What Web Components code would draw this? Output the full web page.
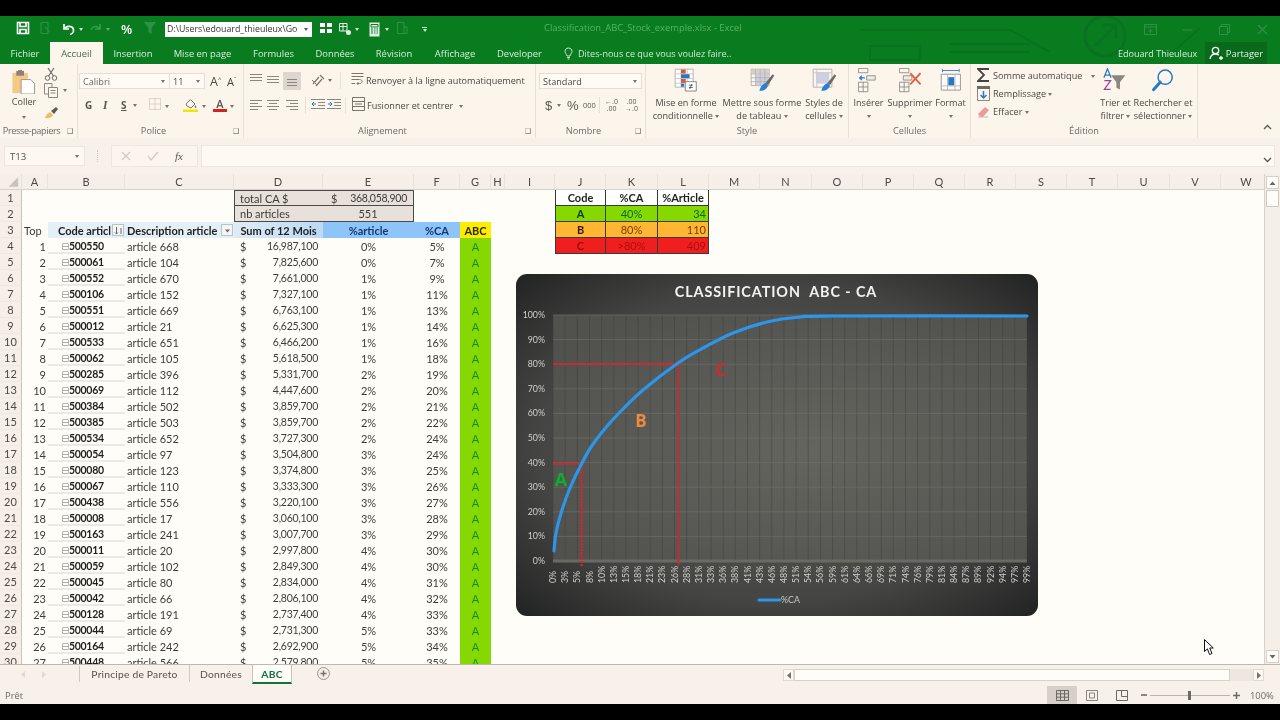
<!DOCTYPE html>
<html lang="fr">
<head>
<meta charset="utf-8">
<title>Classification_ABC_Stock_exemple.xlsx - Excel</title>
<style>
  html, body { margin: 0; height: 720px; overflow: hidden; background: #000; }
  body { padding: 16px 0; box-sizing: border-box; display: flex; flex-direction: column; position: relative; font-family: "Open Sans", sans-serif; }
  /* the reference is a soft video frame */
  body > * { filter: blur(.3px); }
</style>
</head>
<body>
<xl-titlebar></xl-titlebar>
<xl-ribbon></xl-ribbon>
<xl-formula-bar></xl-formula-bar>
<xl-sheet><xl-chart></xl-chart></xl-sheet>
<xl-sheet-tabs></xl-sheet-tabs>
<xl-status></xl-status>
<xl-cursor></xl-cursor>
<script>
const svg = (w, h, body) =>
  `<svg width="${w}" height="${h}" viewBox="0 0 ${w} ${h}" fill="none" xmlns="http://www.w3.org/2000/svg">${body}</svg>`;
const caret = '<i class="caret"></i>';

class Base extends HTMLElement {
  constructor() {
    super();
    this.attachShadow({ mode: "open" });
  }
  connectedCallback() {
    this.shadowRoot.innerHTML = this.render();
  }
}

class XlTitlebar extends Base {
  render() {
    const tabs = [["Fichier", 50], ["Accueil", 53, "on"], ["Insertion", 60], ["Mise en page", 79], ["Formules", 63], ["Données", 60], ["Révision", 58], ["Affichage", 64], ["Developer", 65]];
    const dim = "#2f9146";
    return `<style>
      :host { display: block; height: 48px; background: #0a7c20; color: #fff; position: relative; font: 9.4px "Open Sans", sans-serif; flex: none; }
      .top { height: 26px; display: flex; align-items: center; }
      .top > * { flex: none; }
      .decor { position: absolute; left: 860px; top: 0; }
      .caret { display: inline-block; border: 2.5px solid transparent; border-top: 3px solid #cfe8d4; border-bottom: 0; }
      .path { width: 147px; height: 15px; background: #fff; color: #333; margin-left: 8px; display: flex; align-items: center; justify-content: space-between; box-sizing: border-box; padding: 0 4px 0 2px; font-size: 8.8px; white-space: nowrap; overflow: hidden; }
      .path .caret { border-top-color: #555; }
      .doc { position: absolute; left: 544px; top: 5px; width: 191px; text-align: center; color: #58b06b; font-size: 9.4px; white-space: nowrap; }
      .win { position: absolute; top: 6px; left: 1144px; display: flex; align-items: center; height: 14px; }
      .win span { width: 37.5px; display: flex; }
      .tabs { height: 22px; display: flex; align-items: stretch; position: relative; }
      .tab { flex: none; display: flex; align-items: center; justify-content: center; color: #d6ecd9; white-space: nowrap; }
      .tab.on { background: #fcf5ec; color: #40704a; }
      .tell { display: flex; align-items: center; gap: 5px; margin-left: 12px; color: #cfe8d4; font-size: 9.05px; white-space: nowrap; }
      .user { position: absolute; left: 1118px; top: 0; height: 22px; display: flex; align-items: center; color: #d6ecd9; font-size: 9.05px; white-space: nowrap; }
      .share { position: absolute; left: 1205px; top: 0; width: 62px; height: 22px; background: #0a6a1c; display: flex; align-items: center; justify-content: center; gap: 3px; color: #e4f2e6; }
    </style>
    <svg class="decor" width="340" height="48" fill="none" stroke="#087220" stroke-width="2"><path d="M0 14H150L190 36M10 30H60V44H10ZM90 28H170M90 36H170"/><circle cx="245" cy="20" r="20" stroke-width="3"/><path d="M235 30L256 9M243 9H256V22" stroke-width="3"/><path d="M300 48L340 12"/></svg>
    <div class="top">
      <span style="margin-left:16px">${svg(14, 14, '<path d="M1.5 1.5H12.5V12.5H1.5ZM4 1.5V5.5H10V1.5M4 12.5V8.5H10V12.5" stroke="#fff" stroke-width="1.6"/>')}</span>
      <span style="margin-left:8px">${svg(14, 14, `<path d="M3 1.5H10V12.5H3Z" stroke="${dim}"/><path d="M7 6L12 11" stroke="${dim}"/>`)}</span>
      <span style="margin-left:9px;display:flex;align-items:center;gap:3px">${svg(15, 14, '<path d="M3 2V7H8" stroke="#fff" stroke-width="1.7"/><path d="M3.5 6.5C6 3.5 12 3.5 12.5 8C12.8 10 11 12 9 12.5" stroke="#fff" stroke-width="1.7"/>')}${caret}</span>
      <span style="margin-left:6px;opacity:.45;display:flex;align-items:center;gap:3px">${svg(14, 14, '<path d="M11 2V7H6M10.5 6.5C8 3.5 3 4 2 8" stroke="#6fc182" stroke-width="1.5"/>')}${caret}</span>
      <b style="margin-left:11px;font-size:13px;font-weight:600;width:14px">%</b>
      <span style="margin-left:8px">${svg(14, 14, `<path d="M1 1H13L8.5 7V13L5.5 11V7Z" fill="${dim}"/>`)}</span>
      <div class="path"><span>D:\\Users\\edouard_thieuleux\\Go</span>${caret}</div>
      <span style="margin-left:7px">${svg(14, 12, '<path d="M1 1H6V5H1ZM8 1H13V5H8ZM1 7H6V11H1ZM8 7H13V11H8Z" fill="#fff"/>')}</span>
      <span style="margin-left:5px;display:flex;align-items:center;gap:3px">${svg(14, 14, '<path d="M1.5 1.5H9V9H1.5Z" stroke="#e4f2e6"/><path d="M1.5 4.5H9M5 1.5V9" stroke="#e4f2e6"/><circle cx="10.5" cy="10.5" r="2.5" fill="#e4f2e6"/>')}${caret}</span>
      <span style="margin-left:10px;display:flex;align-items:center;gap:5px">${svg(11, 15, '<rect x=".5" y=".5" width="10" height="14" fill="#e4f2e6"/><path d="M2 2.5H9V5H2ZM2 7H4M5 7H6.5M7.5 7H9M2 9H4M5 9H6.5M7.5 9H9M2 11H4M5 11H6.5M7.5 11H9" stroke="#0a7c20"/>')}${caret}</span>
      <span style="margin-left:7px">${svg(12, 14, `<path d="M1.5 1.5H8V12.5H1.5ZM8 6H11V12.5H8" stroke="${dim}"/>`)}</span>
      <span style="margin-left:14px;display:flex;flex-direction:column;align-items:center;gap:1px"><i style="width:5px;height:1px;background:#cfe8d4"></i>${caret}</span>
    </div>
    <div class="doc">Classification_ABC_Stock_exemple.xlsx - Excel</div>
    <div class="win">
      <span>${svg(13, 11, `<path d="M.5 .5H12.5V10.5H.5ZM.5 3H12.5M6.5 5V9M4.5 7H8.5" stroke="${dim}"/>`)}</span>
      <span>${svg(11, 11, `<path d="M0 6H10" stroke="${dim}"/>`)}</span>
      <span>${svg(11, 11, `<path d="M.5 2.5H8.5V10.5H.5ZM2.5 2.5V.5H10.5V8.5H8.5" stroke="${dim}"/>`)}</span>
      <span>${svg(11, 11, `<path d="M1 1L10 10M10 1L1 10" stroke="${dim}" stroke-width="1.2"/>`)}</span>
    </div>
    <div class="tabs">
      ${tabs.map(([t, w, on]) => `<div class="tab ${on || ""}" style="width:${w}px">${t}</div>`).join("")}
      <div class="tell">${svg(9, 13, '<path d="M4.5 1C2.3 1 1 2.6 1 4.4C1 6.2 2.7 7.2 3 9H6C6.3 7.2 8 6.2 8 4.4C8 2.6 6.7 1 4.5 1ZM3.2 10.5H5.8M3.6 12H5.4" stroke="#cfe8d4"/>')}<span>Dites-nous ce que vous voulez faire..</span></div>
      <div class="user">Edouard Thieuleux</div>
      <div class="share">${svg(14, 14, '<circle cx="6.5" cy="4.5" r="3.2" stroke="#fff" stroke-width="1.3"/><path d="M1 13C1.5 9.5 3.5 8 6.5 8C8 8 9 8.4 9.8 9.2M10 12H14M12 10V14" stroke="#fff" stroke-width="1.3"/>')}<span>Partager</span></div>
    </div>`;
  }
}

class XlGroup extends HTMLElement {
  constructor() {
    super();
    this.attachShadow({ mode: "open" });
    this.shadowRoot.innerHTML = `<style>
      :host { display: flex; flex-direction: column; flex: none; height: 74px; box-sizing: border-box; border-right: 1px solid #e8e0d8; position: relative; }
      :host([launcher]) .label { padding-right: 14px; }
      .body { flex: 1; min-height: 0; display: flex; }
      .label { height: 15px; text-align: center; color: #6d6a66; font-size: 9.2px; line-height: 15px; white-space: nowrap; letter-spacing: var(--label-ls, 0); }
      .launch { position: absolute; right: 4px; bottom: 4px; width: 4px; height: 4px; border: 1px solid #9a958f; border-top-color: #ccc; border-left-color: #ccc; }
    </style><div class="body"><slot></slot></div><div class="label"></div>`;
  }
  connectedCallback() {
    this.shadowRoot.querySelector(".label").textContent = this.getAttribute("label");
    if (this.hasAttribute("launcher")) {
      const l = document.createElement("div");
      l.className = "launch";
      this.shadowRoot.appendChild(l);
    }
  }
}

class XlRibbon extends Base {
  render() {
    const gray = "#8b8680";
    const alignIcon = (rows) => svg(14, 13, rows.map(([x1, x2, y]) => `<path d="M${x1} ${y}H${x2}" stroke="${gray}"/>`).join(""));
    const big = (icon, l1, l2, w, ml) => `<div class="big" style="width:${w}px;margin-left:${ml}px"><div class="bigicon">${icon}</div><div class="t">${l1}</div><div class="t">${l2}</div></div>`;
    const fmtIcon = svg(30, 32, `<path d="M1.5 1.5H24.5V24.5H1.5Z" fill="#fff" stroke="#a8a39d"/><path d="M1.5 7.5H24.5M1.5 13.5H24.5M1.5 19.5H24.5M9 1.5V24.5M17 1.5V24.5" stroke="#c4bfb8"/><path d="M9 2H15V7H9Z" fill="#d9543a"/><path d="M9 8H20V13H9Z" fill="#2676c9"/><path d="M9 14H15V19H9Z" fill="#d9543a"/><path d="M9 20H13V24H9Z" fill="#2676c9"/><path d="M14.5 17.5H28.5V29.5H14.5Z" fill="#fff" stroke="#6d6a66"/><path d="M19 22H24M19 25H24M23 20.5L20 27" stroke="#444"/>`);
    const tblIcon = svg(32, 32, `<path d="M1.5 1.5H24.5V22.5H1.5Z" fill="#f8f6f3" stroke="#a8a39d"/><path d="M2 2H24V7H2Z" fill="#d5d0ca"/><path d="M7 8H24V22H7Z" fill="#cfcfe4"/><path d="M1.5 7.5H24.5M1.5 12.5H24.5M1.5 17.5H24.5M7 1.5V22.5M13 1.5V22.5M19 1.5V22.5" stroke="#b4afa9"/><path d="M20 19L29 8L31 10L23 22Z" fill="#6f6a64"/><path d="M12 29C13 24 17 20 21 19L23 23C21 27 17 30 12 29Z" fill="#2b7fd1"/>`);
    const styIcon = svg(32, 32, `<path d="M1.5 1.5H25.5V24.5H1.5Z" fill="#f8f6f3" stroke="#a8a39d"/><path d="M6 6H22V20H6Z" fill="#cfcfe4"/><path d="M1.5 6H25.5M6 1.5V24.5" stroke="#c4bfb8"/><path d="M20 19L29 8L31 10L23 22Z" fill="#6f6a64"/><path d="M12 29C13 24 17 20 21 19L23 23C21 27 17 30 12 29Z" fill="#2b7fd1"/>`);
    const cellsBase = `<path d="M.5 .5H11.5V5.5H.5ZM.5 16.5H11.5V27.5H.5ZM.5 22H11.5M6 16.5V27.5" stroke="#8b8680"/>`;
    const insIcon = svg(24, 29, `${cellsBase}<path d="M10 9H20V14H10Z" fill="#f0ebe5" stroke="#8b8680"/><path d="M8 11.5H2M4.5 9L2 11.5L4.5 14" stroke="#2676c9" stroke-width="1.5"/>`);
    const delIcon = svg(26, 29, `${cellsBase}<path d="M5 9H15V14H5Z" fill="#f0ebe5" stroke="#8b8680"/><path d="M13 6L25 19M25 6L13 19" stroke="#e05a3c" stroke-width="2"/>`);
    const frmIcon = svg(26, 30, `<path d="M3 3H23M3 1V5M23 1V5" stroke="#2676c9"/><path d="M1.5 7.5H24.5V26.5H1.5Z" fill="#fff" stroke="#8b8680"/><path d="M10 11H17V21H10Z" fill="#2676c9"/><path d="M9 7.5V26.5M18 7.5V26.5M1.5 21.5H24.5" stroke="#b4afa9"/>`);
    return `<style>
      :host { display: flex; height: 74px; background: #fcf5ec; color: #4a4744; font: 9.1px "Open Sans", sans-serif; flex: none; position: relative; }
      .caret { display: inline-block; flex: none; border: 2.5px solid transparent; border-top: 3px solid #77726c; border-bottom: 0; vertical-align: middle; }
      .col { display: flex; flex-direction: column; }
      .row { display: flex; align-items: center; height: 16px; flex: none; }
      .row > * { flex: none; }
      .box { height: 16px; box-sizing: border-box; background: #fffbf4; border: 1px solid #e6ded5; display: flex; align-items: center; justify-content: space-between; padding: 0 4px 0 3px; }
      .big { display: flex; flex-direction: column; align-items: center; flex: none; }
      .bigicon { height: 28px; margin-top: 4px; display: flex; align-items: flex-start; justify-content: center; }
      .bigicon svg { height: 25px; width: auto; }
      .t { height: 13px; line-height: 13px; white-space: nowrap; text-align: center; }
      .collapse { position: absolute; right: 8px; bottom: 5px; }
      .on { background: #dcd6cf; }
      .ed { height: 18px; display: flex; align-items: center; gap: 3px; white-space: nowrap; }
    </style>
    <xl-group label="Presse-papiers" launcher style="width:78px;--label-ls:-.42px">
      <div class="col" style="width:40px;align-items:center;margin-left:4px;padding-top:5px">
        ${svg(26, 26, '<path d="M1 4H17V25H1Z" fill="#f5c985"/><path d="M5 2H13V7H5Z" fill="#8d8076"/><path d="M7 1H11V3H7Z" fill="#8d8076"/><path d="M10 11H20L24 15V26H10Z" fill="#fff" stroke="#9a958f"/>')}
        <div class="t" style="margin-top:1px">Coller</div><div style="margin-top:2px">${caret}</div>
      </div>
      <div class="col" style="padding-top:3px;gap:1px">
        ${svg(14, 14, '<circle cx="3.5" cy="11" r="2.3" stroke="#6d6a66"/><circle cx="10.5" cy="11" r="2.3" stroke="#6d6a66"/><path d="M4.5 9L10 1M9.5 9L4 1" stroke="#6d6a66" stroke-width="1.2"/>')}
        <div style="display:flex;align-items:center;gap:5px;margin-top:1px">${svg(14, 15, '<path d="M.5 .5H8V11H.5Z" fill="#fcf5ec" stroke="#8b8680"/><path d="M4.5 4.5H13.5V14.5H4.5Z" fill="#fcf5ec" stroke="#8b8680"/><path d="M6.5 7.5H11.5M6.5 10H11.5" stroke="#8b8680"/>')}${caret}</div>
        <span style="margin-top:8px">${svg(14, 12, '<path d="M1 11C2 8 4 6 6 5L9 8C8 10 5 12 1 11Z" fill="#e3c06a"/><path d="M7 4L12 0L14 2L10 7Z" fill="#5e5a55"/>')}</span>
      </div>
    </xl-group>
    <xl-group label="Police" launcher style="width:166px">
      <div class="col" style="margin-left:1px;padding-top:9px;gap:8px">
        <div class="row">
          <div class="box" style="width:91px;color:#666"><span>Calibri</span>${caret}</div>
          <div class="box" style="width:35px;border-left:0"><span>11</span>${caret}</div>
          <span style="margin-left:5px;font-size:12.5px;width:17px">A<sup style="font-size:6px">^</sup></span>
          <span style="font-size:11px">A<sup style="font-size:6px">ˇ</sup></span>
        </div>
        <div class="row" style="font-family:'Liberation Serif',serif;font-size:11.5px;color:#5a5652">
          <b style="margin-left:6px;width:18px;font-family:'Open Sans';font-size:10px">G</b>
          <i style="width:18px;font-weight:600">I</i>
          <b style="width:12px;text-decoration:underline;font-family:'Open Sans';font-size:10px">S</b>${caret}
          <span style="margin-left:11px">${svg(14, 14, '<path d="M1.5 1.5H12.5V12.5H1.5ZM1.5 7H12.5M7 1.5V12.5" stroke="#bdb8b2" stroke-dasharray="1 1"/>')}</span>
          <span style="margin-left:3px">${caret}</span>
          <span style="margin-left:14px">${svg(15, 15, '<path d="M3 7L7.5 2.5L12 7L8 11L4 9Z" fill="#fcf5ec" stroke="#7a756f"/><path d="M12 8C13 9.5 14 10 13 11C12 11.5 11.5 9.5 12 8Z" fill="#2676c9"/><path d="M0 12.5H15V15H0Z" fill="#f2e600"/>')}</span>
          <span style="margin-left:4px">${caret}</span>
          <span style="margin-left:7px;display:flex;flex-direction:column;align-items:center;width:14px;font:600 11px/11px 'Open Sans'">A<i style="width:14px;height:3px;background:#d6211f"></i></span>
          <span style="margin-left:3px">${caret}</span>
        </div>
      </div>
    </xl-group>
    <xl-group label="Alignement" launcher style="width:292px">
      <div class="col" style="margin-left:4px;padding-top:8px;gap:8px">
        <div class="row" style="height:17px">
          <span style="width:17px;margin-left:1px">${alignIcon([[1, 13, 1.5], [1, 13, 4.5], [1, 13, 7.5]])}</span>
          <span style="width:17px">${alignIcon([[1, 13, 3.5], [1, 13, 6.5], [1, 13, 9.5]])}</span>
          <span class="on" style="width:18px;height:18px;display:flex;align-items:center;justify-content:center">${alignIcon([[2, 12, 5.5], [2, 12, 8.5], [2, 12, 11.5]])}</span>
          <span style="margin-left:10px;display:flex;align-items:center;gap:2px">${svg(15, 14, '<path d="M2 10L8 3M5 12L11 5M9 1L13 5" stroke="#7a756f" stroke-width="1.2"/><path d="M1 6L6 11" stroke="#7a756f"/>')}${caret}</span>
          <span style="margin-left:8px;width:1px;height:17px;background:#e8e0d8"></span>
          <span style="margin-left:10px;width:15px">${svg(13, 14, '<path d="M.5 1.5H12.5M.5 4.5H12.5M.5 7.5H8.5C12 7.5 12 11.5 8.5 11.5H6M7.5 10L6 11.5L7.5 13M.5 11.5H4" stroke="#7a756f"/>')}</span>
          <span style="white-space:nowrap">Renvoyer à la ligne automatiquement</span>
        </div>
        <div class="row" style="height:17px">
          <span style="width:17px;margin-left:1px">${alignIcon([[1, 13, 2.5], [1, 9, 5.5], [1, 13, 8.5], [1, 9, 11.5]])}</span>
          <span style="width:17px">${alignIcon([[1, 13, 2.5], [3, 11, 5.5], [1, 13, 8.5], [3, 11, 11.5]])}</span>
          <span style="width:18px;padding-left:2px;box-sizing:border-box">${alignIcon([[1, 13, 2.5], [5, 13, 5.5], [1, 13, 8.5], [5, 13, 11.5]])}</span>
          <span style="margin-left:4px;width:1px;height:17px;background:#e8e0d8"></span>
          <span style="margin-left:5px;width:16px">${svg(14, 12, '<path d="M0 1.5H14M7 4.5H14M7 7.5H14M0 10.5H14" stroke="#8b8680"/><path d="M5 6H1M3 4L1 6L3 8" stroke="#2676c9"/>')}</span>
          <span style="width:17px">${svg(14, 12, '<path d="M0 1.5H14M7 4.5H14M7 7.5H14M0 10.5H14" stroke="#8b8680"/><path d="M1 6H5M3 4L5 6L3 8" stroke="#2676c9"/>')}</span>
          <span style="margin-left:1px;width:1px;height:17px;background:#e8e0d8"></span>
          <span style="margin-left:6px;width:15px">${svg(13, 14, '<path d="M.5 .5H12.5V13.5H.5ZM.5 4.5H12.5M.5 9.5H12.5M3 7H10" stroke="#7a756f"/>')}</span>
          <span style="white-space:nowrap">Fusionner et centrer</span>
          <span style="margin-left:6px">${caret}</span>
        </div>
      </div>
    </xl-group>
    <xl-group label="Nombre" launcher style="width:110px">
      <div class="col" style="margin-left:3px;padding-top:9px;gap:8px">
        <div class="box" style="width:103px"><span>Standard</span>${caret}</div>
        <div class="row" style="color:#5a5652">
          <span style="margin-left:6px;font-size:13px;width:12px;font-family:'Liberation Sans'">$</span>${caret}
          <span style="margin-left:6px;font-size:13px;width:16px;font-family:'Liberation Sans'">%</span>
          <span style="font-size:7.5px;width:14px">000</span>
          <span style="margin-left:2px;width:1px;height:16px;background:#e8e0d8"></span>
          <span style="margin-left:3px;font-size:7px;line-height:7px;width:17px;text-align:center">←.0<br>.00</span>
          <span style="margin-left:3px;font-size:7px;line-height:7px;width:17px;text-align:center">.00<br>→.0</span>
        </div>
      </div>
    </xl-group>
    <xl-group label="Style" style="width:203px">
      ${big(fmtIcon, "Mise en forme", `conditionnelle ${caret}`, 70, 5)}
      ${big(tblIcon, "Mettre sous forme", `de tableau ${caret}`, 78, 2)}
      ${big(styIcon, "Styles de", `cellules ${caret}`, 36, 5)}
    </xl-group>
    <xl-group label="Cellules" style="width:122px">
      ${big(insIcon, "Insérer", caret, 29, 5)}
      ${big(delIcon, "Supprimer", caret, 44, 5)}
      ${big(frmIcon, "Format", caret, 31, 3)}
    </xl-group>
    <xl-group label="Édition" style="width:227px">
      <div class="col" style="margin-left:6px;padding-top:2px;width:124px">
        <div class="ed">${svg(13, 14, '<path d="M12 1H1L7 7L1 13H12" stroke="#444" stroke-width="1.8"/>')}<span style="margin-left:0">Somme automatique</span><span style="margin-left:6px">${caret}</span></div>
        <div class="ed">${svg(13, 15, '<path d="M.5 .5H12.5V14.5H.5Z" stroke="#8b8680"/><path d="M0 0H13V3H0Z" fill="#6d6a66"/><path d="M6.5 5V12M3.5 9L6.5 12L9.5 9" stroke="#2676c9" stroke-width="1.5"/>')}<span style="margin-left:0">Remplissage ${caret}</span></div>
        <div class="ed">${svg(13, 13, '<path d="M1 9L8 2L12 5L6 12H3Z" fill="#ef9a9a"/><path d="M1 12H11" stroke="#bbb"/>')}<span style="margin-left:0">Effacer ${caret}</span></div>
      </div>
      <div class="big" style="width:29px"><div class="bigicon">${svg(28, 28, '<path d="M1 11L5 1L9 11M2.5 8H7.5" stroke="#2676c9" stroke-width="1.4"/><path d="M1.5 14H8.5L1.5 24H8.5" stroke="#a0409a" stroke-width="1.4"/><path d="M9 8H25L19 16V24L15 22V16Z" fill="#8b8680"/>')}</div><div class="t">Trier et</div><div class="t">filtrer ${caret}</div></div>
      <div class="big" style="width:58px;margin-left:4px"><div class="bigicon">${svg(28, 30, '<circle cx="17" cy="11" r="8.5" stroke="#2676c9" stroke-width="1.8" fill="#fcf5ec"/><path d="M11 17L3 26" stroke="#2676c9" stroke-width="3.5" stroke-linecap="round"/>')}</div><div class="t">Rechercher et</div><div class="t">sélectionner ${caret}</div></div>
    </xl-group>
    <span class="collapse">${svg(9, 6, '<path d="M1 5L4.5 1.5L8 5" stroke="#5a5652" stroke-width="1.3"/>')}</span>`;
  }
}

class XlFormulaBar extends Base {
  render() {
    return `<style>
      :host { display: flex; align-items: center; height: 36px; background: #f8f1ea; font: 9.6px "Open Sans", sans-serif; color: #55524e; flex: none; padding: 0 5px 0 4px; box-sizing: border-box; position: relative; }
      .name { width: 81px; height: 20px; box-sizing: border-box; background: #fdf8f1; border: 1px solid #eee5dc; display: flex; align-items: center; justify-content: space-between; padding: 0 5px; }
      .caret { display: inline-block; border: 2.5px solid transparent; border-top: 3px solid #77726c; border-bottom: 0; }
      .dots { width: 1px; height: 12px; margin: 0 12px 0 12px; border-left: 1px dotted #cfc8c0; }
      .fn { width: 87px; height: 22px; box-sizing: border-box; background: #fbf5ee; border: 1px solid #eee5dc; display: flex; align-items: center; gap: 16px; padding-left: 9px; }
      .input { flex: 1; height: 22px; margin-left: 3px; box-sizing: border-box; background: #fffaf1; border: 1px solid #eee5dc; }
      .more { position: absolute; right: 8px; top: 15px; }
    </style>
    <div class="name"><span>T13</span><i class="caret"></i></div>
    <div class="dots"></div>
    <div class="fn">
      ${svg(10, 10, '<path d="M1 1L9 9M9 1L1 9" stroke="#cfc8c0" stroke-width="1.2"/>')}
      ${svg(12, 10, '<path d="M1 5L4 9L11 1" stroke="#cfc8c0" stroke-width="1.2"/>')}
      <i style="font:italic 11px 'Liberation Serif',serif;color:#5a5652">fx</i>
    </div>
    <div class="input"></div>
    <span class="more">${svg(9, 6, '<path d="M1 1L4.5 4.5L8 1" stroke="#5a5652" stroke-width="1.3"/>')}</span>`;
  }
}

const SHEET_ROWS = [
  ["500550", "668", "16,987,100", 0, 5], ["500061", "104", "7,825,600", 0, 7], ["500552", "670", "7,661,000", 1, 9],
  ["500106", "152", "7,327,100", 1, 11], ["500551", "669", "6,763,100", 1, 13], ["500012", "21", "6,625,300", 1, 14],
  ["500533", "651", "6,466,200", 1, 16], ["500062", "105", "5,618,500", 1, 18], ["500285", "396", "5,331,700", 2, 19],
  ["500069", "112", "4,447,600", 2, 20], ["500384", "502", "3,859,700", 2, 21], ["500385", "503", "3,859,700", 2, 22],
  ["500534", "652", "3,727,300", 2, 24], ["500054", "97", "3,504,800", 3, 24], ["500080", "123", "3,374,800", 3, 25],
  ["500067", "110", "3,333,300", 3, 26], ["500438", "556", "3,220,100", 3, 27], ["500008", "17", "3,060,100", 3, 28],
  ["500163", "241", "3,007,700", 3, 29], ["500011", "20", "2,997,800", 4, 30], ["500059", "102", "2,849,300", 4, 30],
  ["500045", "80", "2,834,000", 4, 31], ["500042", "66", "2,806,100", 4, 32], ["500128", "191", "2,737,400", 4, 33],
  ["500044", "69", "2,731,300", 5, 33], ["500164", "242", "2,692,900", 5, 34], ["500448", "566", "2,579,800", 5, 35],
];
const COL_WIDTHS = [22, 26, 77, 109, 89, 91, 46, 31, 14, 50, 51, 52, 51, 51, 52, 51, 51, 51, 51, 51, 51, 52, 51, 51];
const COL_NAMES = "ABCDEFGHIJKLMNOPQRSTUVW".split("");

class XlSheet extends Base {
  render() {
    const cell = (col, row, text, cls = "") =>
      `<div class="c ${cls}" style="grid-area:${row + 1}/${col + 1}">${text}</div>`;
    let html = `<div class="c hd corner" style="grid-area:1/1">${svg(22, 16, '<path d="M19 3V13H9Z" fill="#c9c3bc"/>')}</div>`;
    COL_NAMES.forEach((n, i) => { html += cell(i + 1, 0, n, "hd"); });
    for (let r = 1; r <= 30; r++) html += cell(0, r, r, "hd rh");
    // block above the pivot table
    html += `<div class="c tot l" style="grid-area:2/5;border-width:1px 0 1px 1px">total CA $</div>`;
    html += `<div class="c tot money" style="grid-area:2/6;border-width:1px 1px 1px 0"><span>$</span><span class="v">368,058,900</span></div>`;
    html += `<div class="c tot l" style="grid-area:3/5;border-width:0 0 1px 1px">nb articles</div>`;
    html += `<div class="c tot mid" style="grid-area:3/6;border-width:0 1px 1px 0">551</div>`;
    // small legend table
    [["Code", "%CA", "%Article", "lg w"], ["A", "40%", "34", "lg ga"], ["B", "80%", "110", "lg ob"], ["C", "&gt;80%", "409", "lg rc"]].forEach((r, i) => {
      html += cell(10, i + 1, r[0], r[3] + " mid bold first");
      html += cell(11, i + 1, r[1], r[3] + " mid" + (i ? "" : " bold"));
      html += cell(12, i + 1, r[2], r[3] + (i ? " num" : " mid bold"));
    });
    // pivot header
    html += cell(1, 3, "Top", "l");
    html += cell(2, 3, `<span>Code articl</span><i class="btn">${svg(9, 9, '<path d="M2.5 1V8M1 6.5L2.5 8L4 6.5M7 2V8" stroke="#667"/>')}</i>`, "ph code-h bold");
    html += cell(3, 3, `<span>Description article</span><i class="btn">${svg(9, 9, '<path d="M2 3.5H7L4.5 6.5Z" fill="#667"/>')}</i>`, "ph bold");
    html += cell(4, 3, "Sum of 12 Mois", "ph2 bold mid");
    html += cell(5, 3, "%article", "pb bold mid");
    html += cell(6, 3, "%CA", "pb bold mid");
    html += cell(7, 3, "ABC", "py bold mid");
    SHEET_ROWS.forEach(([code, art, sum, pa, pc], i) => {
      const r = i + 4;
      html += cell(1, r, i + 1, "num");
      html += cell(2, r, `<i class="minus"></i><b>${code}</b>`, "code");
      html += cell(3, r, `article ${art}`, "l");
      html += `<div class="c money" style="grid-area:${r + 1}/5;padding:0 5px 0 6px"><span>$</span><span class="v">${sum}</span></div>`;
      html += cell(5, r, `${pa}%`, "mid");
      html += cell(6, r, `${pc}%`, "mid");
      html += cell(7, r, "A", "ga2 mid");
    });
    return `<style>
      :host { display: flex; flex: 1; min-height: 0; position: relative; background: #fffdf7; overflow: hidden; }
      .grid { flex: none; width: 1264px; overflow: hidden; display: grid; grid-template-columns: ${COL_WIDTHS.map((w) => w + "px").join(" ")}; grid-auto-rows: 16px; font: 11px Lato, sans-serif; color: #3e3c3a; position: relative; }
      .c { box-sizing: border-box; white-space: nowrap; overflow: hidden; display: flex; align-items: center; min-width: 0; height: 16px; }
      .hd { background: #f6efe8; justify-content: center; color: #4d4a47; border-right: 1px solid #e9e2da; border-bottom: 1px solid #d8d1ca; }
      .rh { border-right: 1px solid #c8c2bb; border-bottom: 1px solid #efe8e0; }
      .corner { padding: 0; }
      .l { padding-left: 2px; }
      .tot { background: #e8e0da; border: solid #4a4a4a; font-size: 11px; }
      .tot.l { padding-left: 5px; }
      .money { justify-content: space-between; padding: 0 6px 0 6px; }
      .v { font-size: 10.5px; letter-spacing: -.25px; }
      .tot.money { padding-left: 8px; }
      .num { justify-content: flex-end; padding-right: 2px; }
      .mid { justify-content: center; }
      .bold { font-weight: 700; color: #1f1f1f; }
      .ph { background: #e5eff7; padding-left: 2px; justify-content: space-between; }
      .code-h { padding-left: 10px; }
      .ph2 { background: linear-gradient(90deg, #dfecf7, #bcd9f5); }
      .pb { background: #8ec4f7; color: #14396e; }
      .py { background: #ffec00; color: #2a2a00; }
      .btn { flex: none; width: 12px; height: 12px; box-sizing: border-box; border: 1px solid #b7c4ce; background: #f5f5f2; margin-right: 1px; display: flex; align-items: center; justify-content: center; }
      .code { box-shadow: inset 0 -2px #ece8e4; padding-left: 14px; color: #1f1f1f; font-weight: 700; height: 16px; }
      .minus { flex: none; width: 7px; height: 7px; box-sizing: border-box; border: 1px solid #b5b0aa; background: linear-gradient(#b5b0aa, #b5b0aa) center/5px 1px no-repeat; border-radius: 1px; }
      .code b { font-weight: 700; font-size: 10.5px; letter-spacing: -.3px; }
      .ga2 { background: #86d900; color: #0d8a2e; }
      .lg { border: 1px solid #3a3a3a; border-width: 0 1px 1px 0; }
      .lg.first { border-left-width: 1px; }
      .lg.w { background: #fff; color: #1f1f1f; }
      .lg.ga { background: #86d900; color: #0a6a22; }
      .lg.ob { background: #ffb733; color: #7a3a00; }
      .lg.rc { background: #f01f1f; color: #a81010; }
      .lg.ga.bold { color: #063c12; } .lg.ob.bold { color: #3a1500; } .lg.rc.bold { color: #9a0c0c; }
      .sb { flex: 1; background: #f6efe8; border-left: 1px solid #d8d1ca; position: relative; display: flex; flex-direction: column; align-items: center; box-sizing: border-box; padding-top: 2px; }
      .up, .down { width: 11px; height: 11px; background: #fffdf7; border: 1px solid #d8d1ca; display: flex; align-items: center; justify-content: center; }
      .thumb { width: 11px; height: 15px; background: #fffdf7; border: 1px solid #cfc8c0; margin-top: 1px; }
      .down { margin-top: auto; margin-bottom: 1px; }
      ::slotted(xl-chart) { position: absolute; left: 516px; top: 100px; }
    </style>
    <div class="grid">${html}</div>
    <div class="sb">
      <div class="up">${svg(7, 4, '<path d="M.5 4L3.5 .5L6.5 4Z" fill="#666"/>')}</div>
      <div class="thumb"></div>
      <div class="down">${svg(7, 4, '<path d="M.5 0L3.5 3.5L6.5 0Z" fill="#666"/>')}</div>
    </div>
    <slot></slot>`;
  }
}

// Catmull-Rom through the points, so the curve has no visible corners
function smooth(pts) {
  let d = `M${pts[0][0]} ${pts[0][1]}`;
  for (let i = 0; i < pts.length - 1; i++) {
    const p0 = pts[i - 1] || pts[i], p1 = pts[i], p2 = pts[i + 1], p3 = pts[i + 2] || p2;
    const c1 = [p1[0] + (p2[0] - p0[0]) / 6, p1[1] + (p2[1] - p0[1]) / 6];
    const c2 = [p2[0] - (p3[0] - p1[0]) / 6, p2[1] - (p3[1] - p1[1]) / 6];
    d += `C${c1[0].toFixed(1)} ${c1[1].toFixed(1)} ${c2[0].toFixed(1)} ${c2[1].toFixed(1)} ${p2[0]} ${p2[1]}`;
  }
  return d;
}

class XlChart extends Base {
  render() {
    const L = 37, R = 511, T = 41, B = 287;
    const xLabels = "0 3 5 8 10 13 15 18 21 23 26 28 31 33 36 38 41 43 46 48 51 54 56 59 61 64 66 69 71 74 76 79 81 84 87 89 92 94 97 99".split(" ");
    const step = (R - L) / 39;
    let grid = "", text = "";
    for (let i = 0; i <= 39; i++) {
      const x = L + i * step;
      grid += `<path d="M${x.toFixed(1)} ${T}V${B}" stroke="#3d3d3a" stroke-width="1" opacity=".45"/>`;
      text += `<text transform="translate(${(x + 3).toFixed(1)} ${B + 22}) rotate(-90)" class="ax">${xLabels[i]}%</text>`;
    }
    for (let p = 0; p <= 10; p++) {
      const y = B - (B - T) * p / 10;
      grid += `<path d="M${L} ${y}H${R}" stroke="#6f6f69" stroke-width="1" opacity=".7"/>`;
      text += `<text x="${L - 8}" y="${y + 3}" text-anchor="end" class="ax">${p * 10}%</text>`;
    }
    const curve = smooth([[554, 551], [556, 533], [562, 510], [570, 488], [582, 463], [591, 447], [603, 431], [620, 412], [643, 390], [678, 363], [705, 347], [733, 333], [767, 322], [800, 317], [835, 316], [1027, 316]]
      .map(([x, y]) => [x - 516, y - 274]));
    return `<style>
      :host { display: block; width: 522px; height: 342px; }
      svg { display: block; border-radius: 11px; }
      .ax { font: 8.8px Lato, sans-serif; fill: #cfcfcb; }
    </style>
    <svg width="522" height="342" viewBox="0 0 522 342" xmlns="http://www.w3.org/2000/svg">
      <defs>
        <radialGradient id="bg" cx="50%" cy="50%" r="70%"><stop offset="0" stop-color="#5a5a56"/><stop offset=".65" stop-color="#454543"/><stop offset="1" stop-color="#222323"/></radialGradient>
        <radialGradient id="pl" cx="55%" cy="55%" r="65%"><stop offset="0" stop-color="#65655f"/><stop offset="1" stop-color="#51514e"/></radialGradient>
      </defs>
      <rect width="522" height="342" fill="url(#bg)"/>
      <rect x="${L}" y="${T}" width="${R - L}" height="${B - T}" fill="url(#pl)"/>
      ${grid}
      <path d="M${L} ${B}H${R}" stroke="#6a6a64" stroke-width="3"/>
      <path d="M${L} 189.5H65.5V${B + 5}M${L} 90H162.5V${B + 5}" fill="none" stroke="#d8242c" stroke-width="2.4" stroke-dasharray="2 1"/>
      <path d="${curve}" fill="none" stroke="#2b96ea" stroke-width="3.2" stroke-linecap="round"/>
      ${text}
      <text x="260" y="23" text-anchor="middle" style="font:700 14.4px Lato,sans-serif;letter-spacing:.9px;fill:#f2f2f2;white-space:pre">CLASSIFICATION  ABC - CA</text>
      <text x="45" y="212" text-anchor="middle" style="font:700 18px 'Open Sans',sans-serif;fill:#0cb02c">A</text>
      <text x="125" y="153" text-anchor="middle" style="font:700 17px 'Open Sans',sans-serif;fill:#f08a3c">B</text>
      <text x="205" y="102" text-anchor="middle" style="font:700 17px 'Open Sans',sans-serif;fill:#d02a2a">C</text>
      <path d="M243 326H264" stroke="#2b96ea" stroke-width="3" stroke-linecap="round"/>
      <text x="265" y="329" style="font:8.8px Lato,sans-serif;fill:#c8c8c4">%CA</text>
    </svg>`;
  }
}

class XlSheetTabs extends Base {
  render() {
    return `<style>
      :host { display: flex; align-items: stretch; height: 22px; flex: none; background: #f8f1ea; border-top: 1px solid #bdb8b2; box-sizing: border-box; font: 10.3px Lato, sans-serif; color: #55524e; position: relative; }
      .nav { width: 80px; display: flex; align-items: center; gap: 17px; padding-left: 21px; box-sizing: border-box; border-right: 1px solid #cfc8c0; margin: 1px 0 4px; }
      .tab { display: flex; align-items: center; justify-content: center; white-space: nowrap; flex: none; margin-bottom: 4px; letter-spacing: .2px; }
      .sep { border-right: 1px solid #cfc8c0; }
      .on { background: #fffdf7; color: #14713c; font-weight: 700; border-bottom: 2px solid #14713c; border-right: 1px solid #c8c2bb; border-left: 1px solid #c8c2bb; height: 19px; margin: 0; box-sizing: border-box; }
      .add { margin-left: 25px; align-self: center; margin-top: -3px; }
      .bar { position: absolute; left: 783px; right: 16px; top: 4px; height: 12px; display: flex; align-items: stretch; }
      .arr { width: 11px; background: #fdf8f0; border: 1px solid #e0d9d1; display: flex; align-items: center; justify-content: center; flex: none; box-sizing: border-box; }
      .track { width: 436px; background: #fffdf7; border: 1px solid #d8d1ca; box-sizing: border-box; }
      .rest { flex: 1; background: #eee7df; }
    </style>
    <div class="nav">${svg(4, 7, '<path d="M4 0L0 3.5L4 7Z" fill="#e0d9d1"/>')}${svg(4, 7, '<path d="M0 0L4 3.5L0 7Z" fill="#e0d9d1"/>')}</div>
    <div class="tab sep" style="width:109px">Principe de Pareto</div>
    <div class="tab" style="width:62px">Données</div>
    <div class="tab on" style="width:40px">ABC</div>
    <span class="add">${svg(13, 13, '<circle cx="6.5" cy="6.5" r="6" stroke="#9a958f" fill="#f3ede6"/><path d="M6.5 3.5V9.5M3.5 6.5H9.5" stroke="#77726c" stroke-width="1.4"/>')}</span>
    <div class="bar">
      <div class="arr">${svg(4, 7, '<path d="M4 0L0 3.5L4 7Z" fill="#77726c"/>')}</div>
      <div class="track"></div>
      <div class="rest"></div>
      <div class="arr">${svg(4, 7, '<path d="M0 0L4 3.5L0 7Z" fill="#77726c"/>')}</div>
    </div>`;
  }
}

class XlStatus extends Base {
  render() {
    return `<style>
      :host { display: flex; align-items: center; height: 18px; flex: none; background: #f8f1ea; font: 9.4px "Open Sans", sans-serif; color: #6d6a66; padding-left: 5px; box-sizing: border-box; }
      .v { flex: none; height: 18px; width: 30px; display: flex; align-items: center; justify-content: center; }
      .on { background: #d6d0c9; }
      .minus { flex: none; width: 6px; margin-left: 4px; display: flex; }
      .slider { flex: none; width: 80px; height: 1px; background: #b9b4ae; margin: 0 3px; position: relative; }
      .slider i { position: absolute; left: 38px; top: -4px; width: 3px; height: 9px; background: #6d6a66; }
      .plus { flex: none; display: flex; }
    </style>
    <span style="flex:1">Prêt</span>
    <div class="v on">${svg(13, 11, '<path d="M.5 .5H12.5V10.5H.5ZM.5 3.8H12.5M.5 7.2H12.5M4.5 .5V10.5M8.5 .5V10.5" stroke="#6d6a66"/>')}</div>
    <div class="v">${svg(12, 11, '<path d="M.5 .5H11.5V10.5H.5Z" stroke="#8b8680"/><path d="M3.5 3H8.5V8H3.5Z" stroke="#8b8680"/>')}</div>
    <div class="v">${svg(12, 11, '<path d="M.5 .5H11.5V10.5H.5ZM5.5 .5V6.5H11.5" stroke="#6d6a66"/>')}</div>
    <span class="minus">${svg(6, 2, '<path d="M0 1H6" stroke="#6d6a66" stroke-width="1.6"/>')}</span>
    <div class="slider"><i></i></div>
    <span class="plus">${svg(7, 7, '<path d="M0 3.5H7M3.5 0V7" stroke="#6d6a66" stroke-width="1.5"/>')}</span>
    <span style="margin:0 3px 0 10px;width:27px;flex:none">100%</span>`;
  }
}

class XlCursor extends Base {
  render() {
    return `<style>
      :host { position: absolute; left: 1204px; top: 639px; width: 11px; height: 17px; pointer-events: none; }
      svg { display: block; }
    </style>
    ${svg(11, 17, '<path d="M.5 .5V12.5L3.4 9.9L5.6 15.5L8 14.5L5.7 9H9.3Z" fill="#fff" stroke="#111"/>')}`;
  }
}

customElements.define("xl-titlebar", XlTitlebar);
customElements.define("xl-group", XlGroup);
customElements.define("xl-ribbon", XlRibbon);
customElements.define("xl-formula-bar", XlFormulaBar);
customElements.define("xl-sheet", XlSheet);
customElements.define("xl-chart", XlChart);
customElements.define("xl-sheet-tabs", XlSheetTabs);
customElements.define("xl-status", XlStatus);
customElements.define("xl-cursor", XlCursor);
</script>
</body>
</html>
